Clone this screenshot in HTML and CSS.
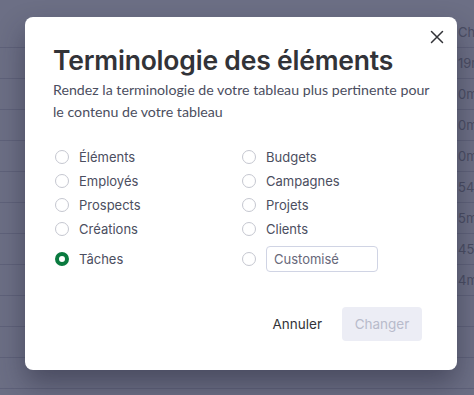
FILE: index.html
```html
<!DOCTYPE html>
<html lang="fr">
<head>
    <meta charset="UTF-8">
    <title>Terminologie des éléments</title>
    <link rel="stylesheet" href="styles.css">
</head>
<body>
    <div class="board">
        <div class="row"><span>Chrono</span></div>
        <div class="row"><span>19m</span></div>
        <div class="row"><span>0m</span></div>
        <div class="row"><span>0m</span></div>
        <div class="row"><span>0m</span></div>
        <div class="row"><span>54m</span></div>
        <div class="row"><span>5m</span></div>
        <div class="row"><span>45m</span></div>
        <div class="row"><span>4m</span></div>
        <div class="row"><span></span></div>
        <div class="row"><span></span></div>
        <div class="row"><span></span></div>
    </div>

    <div class="overlay">
        <div class="modal">
            <button class="close" aria-label="Fermer">
                <svg width="14" height="14" viewBox="0 0 14 14"><path d="M1.5 1.5 L12.5 12.5 M12.5 1.5 L1.5 12.5" stroke="#323338" stroke-width="1.5" stroke-linecap="round"/></svg>
            </button>
            <h1>Terminologie des éléments</h1>
            <p class="desc">Rendez la terminologie de votre tableau plus pertinente pour le contenu de votre tableau</p>

            <div class="options">
                <label class="opt"><span class="radio"></span>Éléments</label>
                <label class="opt"><span class="radio"></span>Budgets</label>
                <label class="opt"><span class="radio"></span>Employés</label>
                <label class="opt"><span class="radio"></span>Campagnes</label>
                <label class="opt"><span class="radio"></span>Prospects</label>
                <label class="opt"><span class="radio"></span>Projets</label>
                <label class="opt"><span class="radio"></span>Créations</label>
                <label class="opt"><span class="radio"></span>Clients</label>
                <label class="opt tall"><span class="radio checked"></span>Tâches</label>
                <label class="opt tall"><span class="radio"></span><input type="text" placeholder="Customisé"></label>
            </div>

            <div class="actions">
                <button class="cancel">Annuler</button>
                <button class="primary" disabled>Changer</button>
            </div>
        </div>
    </div>
</body>
</html>
```

FILE: styles.css
```css
body { margin: 0; width: 474px; height: 395px; overflow: hidden; background: #6c6f85; font-family: "Inter", "Liberation Sans", sans-serif; position: relative; }
.board { padding-top: 17px; }
.row { height: 30px; border-bottom: 1px solid #5f627a; display: flex; justify-content: flex-end; align-items: center; }
.row span { width: 16px; color: #4a4d63; font-size: 13px; white-space: nowrap; overflow: hidden; }
.overlay { position: absolute; inset: 0; }
.modal { position: absolute; left: 25px; top: 17px; width: 432px; height: 353px; box-sizing: border-box; background: white; border-radius: 8px; padding: 24px 20px 0 28px; box-shadow: 0 14px 28px rgba(30,32,50,0.45); }
.close { position: absolute; right: 13px; top: 13px; background: none; border: none; padding: 0; width: 14px; height: 14px; cursor: pointer; }
h1 { margin: 0; font-size: 26.5px; font-weight: 600; color: #323338; letter-spacing: -0.2px; line-height: 38px; }
.desc { margin: 0; font-family: "Lato", "Liberation Sans", sans-serif; font-size: 14.2px; line-height: 22px; color: #4b4e60; }
.options { display: grid; grid-template-columns: 187px 1fr; margin-top: 22px; padding-left: 2px; }
.opt { display: flex; align-items: center; height: 24px; font-size: 13px; color: #4b4e60; }
.opt.tall { height: 36px; }
.radio { width: 12px; height: 12px; border: 1px solid #c5c7d0; border-radius: 50%; margin-right: 10px; flex-shrink: 0; }
.radio.checked { width: 6px; height: 6px; border: 4px solid #0a7a3f; }
input { width: 112px; height: 26px; box-sizing: border-box; border: 1px solid #d0d4e4; border-radius: 4px; padding: 0 7px; font-family: inherit; font-size: 13px; color: #323338; }
input::placeholder { color: #676879; }
.actions { display: flex; justify-content: flex-end; align-items: center; gap: 8px; margin-top: 30px; padding-right: 15px; }
.actions button { font-family: inherit; font-size: 13.5px; border: none; border-radius: 4px; height: 34px; padding: 0 12px; }
.cancel { background: none; color: #323338; }
.primary { background: #ecedf5; color: #b8bbcb; width: 80px; }
```
